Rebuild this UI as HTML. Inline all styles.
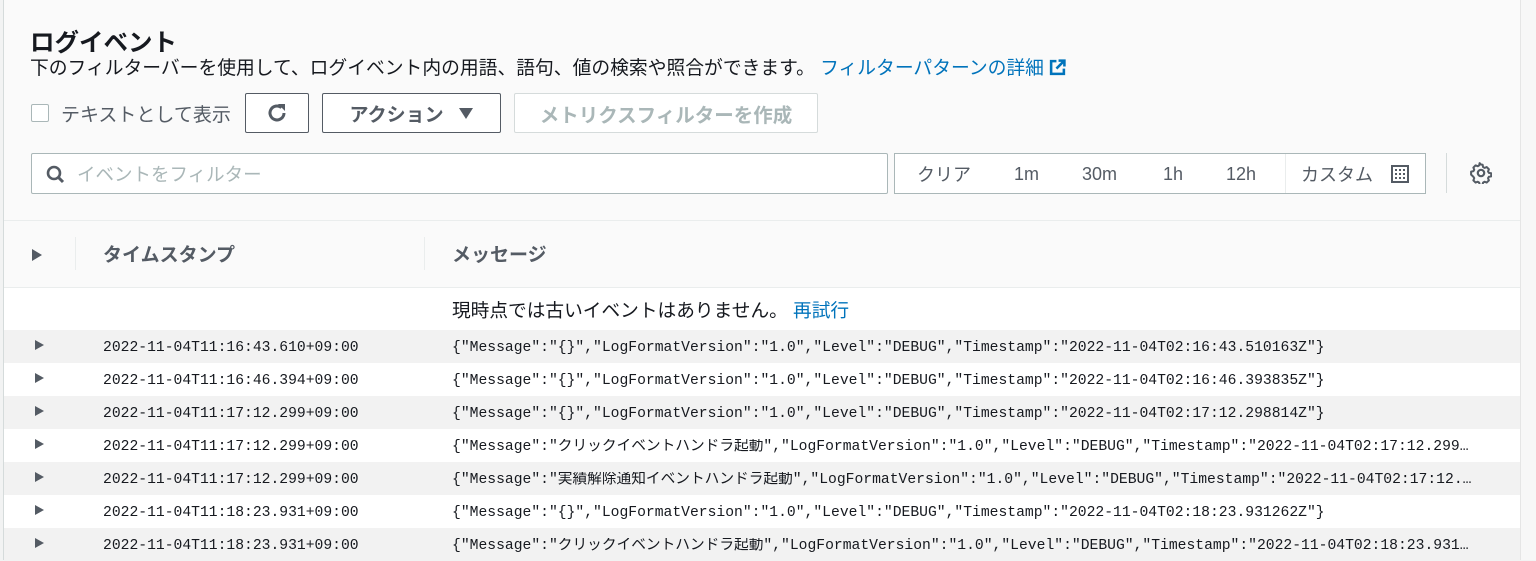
<!DOCTYPE html>
<html><head><meta charset="utf-8"><style>
*{box-sizing:border-box;margin:0;padding:0}
body{width:1536px;height:560px;overflow:hidden;background:#f2f3f3;font-family:"Liberation Sans","Noto Sans CJK JP",sans-serif;color:#16191f;position:relative}
.panel{position:absolute;left:3px;top:0;width:1517px;height:560px;background:#fafafa;border-left:1px solid #d5dbdb}
.abs{position:absolute}
h1{position:absolute;left:26px;top:24px;font-size:24.5px;font-weight:bold}
.desc{left:26px;top:53px;font-size:18.8px;color:#16191f;white-space:nowrap}
.desc a{color:#0073bb;text-decoration:none}
.btn{position:absolute;border:1px solid #545b64;border-radius:2px;background:#fff;font-weight:bold;font-size:19px;color:#545b64;display:flex;align-items:center;justify-content:center}
.mono{font-family:"Liberation Mono","Noto Sans CJK JP",monospace;font-size:14.7px;white-space:nowrap;line-height:16px}
.row{position:absolute;left:0;width:1517px;height:33px}
.row .tri{position:absolute;left:31px;top:10px;width:0;height:0;border-left:9px solid #545b64;border-top:5.5px solid transparent;border-bottom:5.5px solid transparent}
.row .ts{position:absolute;left:99px;top:10px;color:#16191f}
.row .msg{position:absolute;left:448px;top:10px;width:1046px;height:17px;overflow:hidden;text-overflow:ellipsis;color:#16191f}
</style></head><body>
<div class="panel">
<h1>ログイベント</h1>
<div class="abs desc">下のフィルターバーを使用して、ログイベント内の用語、語句、値の検索や照合ができます。 <a>フィルターパターンの詳細 <svg width="17" height="17" viewBox="0 0 16 16" style="vertical-align:-2px"><path d="M7 2H2v12h12V9" fill="none" stroke="#0073bb" stroke-width="2.4"/><path d="M9 1.5h5.5V7M14 2L7 9" fill="none" stroke="#0073bb" stroke-width="2.4"/></svg></a></div>
<div class="abs" style="left:27px;top:104px;width:18px;height:18px;border:1.5px solid #aab7b8;border-radius:2px;background:#fff"></div>
<div class="abs" style="left:57px;top:100px;font-size:19px;color:#545b64">テキストとして表示</div>
<div class="btn" style="left:241px;top:93px;width:64px;height:40px"><svg width="24" height="24" viewBox="0 0 24 24"><path d="M19 12a7 7 0 1 1-2.5-5.4" fill="none" stroke="#545b64" stroke-width="3"/><path d="M13 3h7v7z" fill="#545b64"/></svg></div>
<div class="btn" style="left:318px;top:93px;width:179px;height:40px">アクション&nbsp;&nbsp;&nbsp;<span style="display:inline-block;border-top:11px solid #545b64;border-left:7px solid transparent;border-right:7px solid transparent"></span></div>
<div class="btn" style="left:510px;top:93px;width:304px;height:40px;border-color:#d5dbdb;color:#aab7b8;font-size:19.5px">メトリクスフィルターを作成</div>
<div class="abs" style="left:27px;top:153px;width:857px;height:41px;border:1px solid #aab7b8;border-radius:2px;background:#fff"></div>
<svg class="abs" style="left:41px;top:164px" width="22" height="22" viewBox="0 0 22 22"><circle cx="9" cy="9" r="6" fill="none" stroke="#545b64" stroke-width="2.6"/><path d="M13 13l5 5" stroke="#545b64" stroke-width="3"/></svg>
<div class="abs" style="left:73px;top:161px;font-size:18.5px;color:#aab7b8">イベントをフィルター</div>
<div class="abs" style="left:890px;top:153px;width:532px;height:41px;border:1px solid #aab7b8;background:#fff;font-size:18px;color:#545b64">
<span class="abs" style="left:22px;top:7px">クリア</span>
<span class="abs" style="left:119px;top:10px">1m</span>
<span class="abs" style="left:187px;top:10px">30m</span>
<span class="abs" style="left:268px;top:10px">1h</span>
<span class="abs" style="left:331px;top:10px">12h</span>
<span class="abs" style="left:390px;top:0;width:1px;height:39px;background:#eaeded"></span>
<span class="abs" style="left:406px;top:7px">カスタム</span>
<svg class="abs" style="left:496px;top:11px" width="18" height="18" viewBox="0 0 18 18"><rect x="1" y="1" width="16" height="16" fill="none" stroke="#545b64" stroke-width="2"/><g fill="#545b64"><rect x="4" y="4" width="2" height="2"/><rect x="8" y="4" width="2" height="2"/><rect x="12" y="4" width="2" height="2"/><rect x="4" y="8" width="2" height="2"/><rect x="8" y="8" width="2" height="2"/><rect x="12" y="8" width="2" height="2"/><rect x="4" y="12" width="2" height="2"/><rect x="8" y="12" width="2" height="2"/><rect x="12" y="12" width="2" height="2"/></g></svg>
</div>
<div class="abs" style="left:1442px;top:153px;width:1px;height:40px;background:#d5dbdb"></div>
<svg class="abs" style="left:1466px;top:162px" width="22" height="22" viewBox="0 0 24 24"><path d="M12 2l2 .3.5 2.7 1.7 1 2.6-1 2.6 2.6-1 2.6 1 1.7 2.7.5v3.6l-2.7.5-1 1.7 1 2.6-2.6 2.6-2.6-1-1.700 1-.5 2.7h-3.6l-.5-2.7-1.7-1-2.6 1-2.6-2.6 1-2.6-1-1.7L.3 14v-3.6l2.7-.5 1-1.7-1-2.6 2.6-2.6 2.6 1 1.7-1 .5-2.7z" transform="scale(.92) translate(1 1)" fill="none" stroke="#545b64" stroke-width="2.4" stroke-linejoin="round"/><circle cx="12" cy="12" r="3.5" fill="none" stroke="#545b64" stroke-width="2.4"/></svg>
<div class="abs" style="left:0;top:220px;width:1517px;height:1px;background:#eaeded"></div>
<div class="abs" style="left:28px;top:249px;border-left:10px solid #545b64;border-top:6px solid transparent;border-bottom:6px solid transparent"></div>
<div class="abs" style="left:71px;top:237px;width:1px;height:33px;background:#eaeded"></div>
<div class="abs" style="left:99px;top:240px;font-size:19px;font-weight:bold;color:#545b64">タイムスタンプ</div>
<div class="abs" style="left:420px;top:237px;width:1px;height:33px;background:#eaeded"></div>
<div class="abs" style="left:448px;top:240px;font-size:19px;font-weight:bold;color:#545b64">メッセージ</div>
<div class="abs" style="left:0;top:287px;width:1517px;height:43px;background:#fff;border-top:1px solid #eaeded"></div>
<div class="abs" style="left:448px;top:296px;font-size:18.7px">現時点では古いイベントはありません。 <span style="color:#0073bb">再試行</span></div>
<div class="row mono" style="top:330px;background:#f2f2f2"><div class="tri"></div><div class="ts">2022-11-04T11:16:43.610+09:00</div><div class="msg">{"Message":"{}","LogFormatVersion":"1.0","Level":"DEBUG","Timestamp":"2022-11-04T02:16:43.510163Z"}</div></div>
<div class="row mono" style="top:363px;background:#fff"><div class="tri"></div><div class="ts">2022-11-04T11:16:46.394+09:00</div><div class="msg">{"Message":"{}","LogFormatVersion":"1.0","Level":"DEBUG","Timestamp":"2022-11-04T02:16:46.393835Z"}</div></div>
<div class="row mono" style="top:396px;background:#f2f2f2"><div class="tri"></div><div class="ts">2022-11-04T11:17:12.299+09:00</div><div class="msg">{"Message":"{}","LogFormatVersion":"1.0","Level":"DEBUG","Timestamp":"2022-11-04T02:17:12.298814Z"}</div></div>
<div class="row mono" style="top:429px;background:#fff"><div class="tri"></div><div class="ts">2022-11-04T11:17:12.299+09:00</div><div class="msg">{"Message":"クリックイベントハンドラ起動","LogFormatVersion":"1.0","Level":"DEBUG","Timestamp":"2022-11-04T02:17:12.299…</div></div>
<div class="row mono" style="top:462px;background:#f2f2f2"><div class="tri"></div><div class="ts">2022-11-04T11:17:12.299+09:00</div><div class="msg">{"Message":"実績解除通知イベントハンドラ起動","LogFormatVersion":"1.0","Level":"DEBUG","Timestamp":"2022-11-04T02:17:12.…</div></div>
<div class="row mono" style="top:495px;background:#fff"><div class="tri"></div><div class="ts">2022-11-04T11:18:23.931+09:00</div><div class="msg">{"Message":"{}","LogFormatVersion":"1.0","Level":"DEBUG","Timestamp":"2022-11-04T02:18:23.931262Z"}</div></div>
<div class="row mono" style="top:528px;background:#f2f2f2"><div class="tri"></div><div class="ts">2022-11-04T11:18:23.931+09:00</div><div class="msg">{"Message":"クリックイベントハンドラ起動","LogFormatVersion":"1.0","Level":"DEBUG","Timestamp":"2022-11-04T02:18:23.931…</div></div>
</div>
<div class="abs" style="left:1520px;top:0;width:16px;height:560px;background:#f7f7f7;border-left:1px solid #e5e5e5"></div>
</body></html>
